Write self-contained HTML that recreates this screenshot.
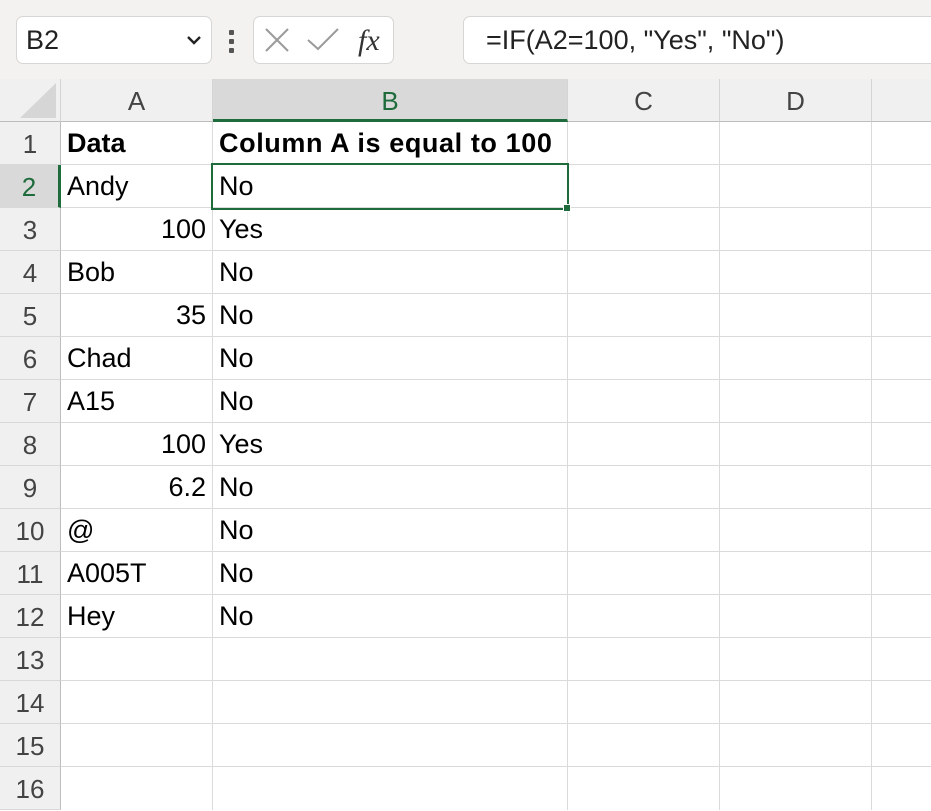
<!DOCTYPE html>
<html><head><meta charset="utf-8"><style>
*{margin:0;padding:0;box-sizing:border-box}
body{width:931px;height:810px;overflow:hidden;background:#fff;font-family:"Liberation Sans",sans-serif;position:relative}
.top{position:absolute;left:0;top:0;width:931px;height:79px;background:#f3f2f1}
.box{position:absolute;background:#fff;border:1px solid #d8d6d4;border-radius:7px}
.abs{position:absolute}
.hdr{position:absolute;top:79px;height:43px;background:#f0f0f0;border-right:1px solid #d4d4d4;border-bottom:1px solid #bdbdbd;color:#444;font-size:26px;text-align:center;line-height:44px}
.rh{position:absolute;left:0;width:61px;height:43px;background:#f0f0f0;border-right:1px solid #bdbdbd;border-bottom:1px solid #d8d8d8;color:#444;font-size:26px;text-align:center;line-height:44px}
.hl{position:absolute;left:61px;width:870px;height:1px;background:#dadada}
.vl{position:absolute;top:122px;width:1px;height:688px;background:#dadada}
.c{position:absolute;font-size:27px;line-height:43px;color:#000;height:43px;white-space:nowrap}
</style></head><body>
<div class="top"></div>
<div class="box" style="left:16px;top:16px;width:196px;height:48px"></div>
<div class="abs" style="left:26px;top:22px;font-size:27px;line-height:36px;color:#222">B2</div>
<svg class="abs" style="left:186px;top:34px" width="16" height="12"><path d="M2 3 L8 9 L14 3" stroke="#222" stroke-width="2.4" fill="none"/></svg>
<div class="abs" style="left:229px;top:30px;width:5px;height:5px;background:#555;border-radius:1px"></div>
<div class="abs" style="left:229px;top:39px;width:5px;height:5px;background:#555;border-radius:1px"></div>
<div class="abs" style="left:229px;top:48px;width:5px;height:5px;background:#555;border-radius:1px"></div>
<div class="box" style="left:253px;top:16px;width:141px;height:48px"></div>
<svg class="abs" style="left:262px;top:25px" width="130" height="32"><path d="M4 4 L26 26 M26 4 L4 26" stroke="#9a9a9a" stroke-width="2" fill="none"/><path d="M46 15 L56 24 L76 4" stroke="#9a9a9a" stroke-width="2" fill="none"/><text x="96" y="25" font-family="Liberation Serif,serif" font-style="italic" font-size="30" fill="#333">fx</text></svg>
<div class="box" style="left:463px;top:16px;width:480px;height:48px"></div>
<div class="abs" style="left:486px;top:22px;font-size:27px;line-height:36px;color:#222">=IF(A2=100, "Yes", "No")</div>

<div class="hdr" style="left:0;width:61px"><svg width="61" height="43" style="position:absolute;left:0;top:0"><path d="M20 39 L56 39 L56 4 Z" fill="#d6d6d6"/></svg></div>
<div class="hdr" style="left:61px;width:152px">A</div>
<div class="hdr" style="left:213px;width:355px;background:#d9d9d9;color:#1e6b3c;border-bottom:3px solid #1e6b3c;line-height:44px">B</div>
<div class="hdr" style="left:568px;width:152px">C</div>
<div class="hdr" style="left:720px;width:152px">D</div>
<div class="hdr" style="left:872px;width:80px"></div>

<div class="vl" style="left:212px"></div>
<div class="vl" style="left:567px"></div>
<div class="vl" style="left:719px"></div>
<div class="vl" style="left:871px"></div>

<div class="rh" style="top:122px">1</div><div class="hl" style="top:164px"></div>
<div class="rh" style="top:165px;background:#d9d9d9;color:#1e6b3c;border-right:3px solid #1e6b3c">2</div><div class="hl" style="top:207px"></div>
<div class="rh" style="top:208px">3</div><div class="hl" style="top:250px"></div>
<div class="rh" style="top:251px">4</div><div class="hl" style="top:293px"></div>
<div class="rh" style="top:294px">5</div><div class="hl" style="top:336px"></div>
<div class="rh" style="top:337px">6</div><div class="hl" style="top:379px"></div>
<div class="rh" style="top:380px">7</div><div class="hl" style="top:422px"></div>
<div class="rh" style="top:423px">8</div><div class="hl" style="top:465px"></div>
<div class="rh" style="top:466px">9</div><div class="hl" style="top:508px"></div>
<div class="rh" style="top:509px">10</div><div class="hl" style="top:551px"></div>
<div class="rh" style="top:552px">11</div><div class="hl" style="top:594px"></div>
<div class="rh" style="top:595px">12</div><div class="hl" style="top:637px"></div>
<div class="rh" style="top:638px">13</div><div class="hl" style="top:680px"></div>
<div class="rh" style="top:681px">14</div><div class="hl" style="top:723px"></div>
<div class="rh" style="top:724px">15</div><div class="hl" style="top:766px"></div>
<div class="rh" style="top:767px">16</div>

<div class="c" style="left:67px;top:122px;font-weight:bold">Data</div>
<div class="c" style="left:219px;top:122px;font-weight:bold;letter-spacing:0.6px">Column A is equal to 100</div>
<div class="c" style="left:67px;top:165px">Andy</div>
<div class="c" style="left:100px;width:106px;text-align:right;top:208px">100</div>
<div class="c" style="left:67px;top:251px">Bob</div>
<div class="c" style="left:100px;width:106px;text-align:right;top:294px">35</div>
<div class="c" style="left:67px;top:337px">Chad</div>
<div class="c" style="left:67px;top:380px">A15</div>
<div class="c" style="left:100px;width:106px;text-align:right;top:423px">100</div>
<div class="c" style="left:100px;width:106px;text-align:right;top:466px">6.2</div>
<div class="c" style="left:67px;top:509px">@</div>
<div class="c" style="left:67px;top:552px">A005T</div>
<div class="c" style="left:67px;top:595px">Hey</div>

<div class="c" style="left:219px;top:165px">No</div>
<div class="c" style="left:219px;top:208px">Yes</div>
<div class="c" style="left:219px;top:251px">No</div>
<div class="c" style="left:219px;top:294px">No</div>
<div class="c" style="left:219px;top:337px">No</div>
<div class="c" style="left:219px;top:380px">No</div>
<div class="c" style="left:219px;top:423px">Yes</div>
<div class="c" style="left:219px;top:466px">No</div>
<div class="c" style="left:219px;top:509px">No</div>
<div class="c" style="left:219px;top:552px">No</div>
<div class="c" style="left:219px;top:595px">No</div>

<div class="abs" style="left:211px;top:163px;width:358px;height:47px;border:2px solid #1e6b3c"></div>
<div class="abs" style="left:563px;top:204px;width:8px;height:8px;background:#1e6b3c;border:1px solid #fff"></div>
</body></html>
